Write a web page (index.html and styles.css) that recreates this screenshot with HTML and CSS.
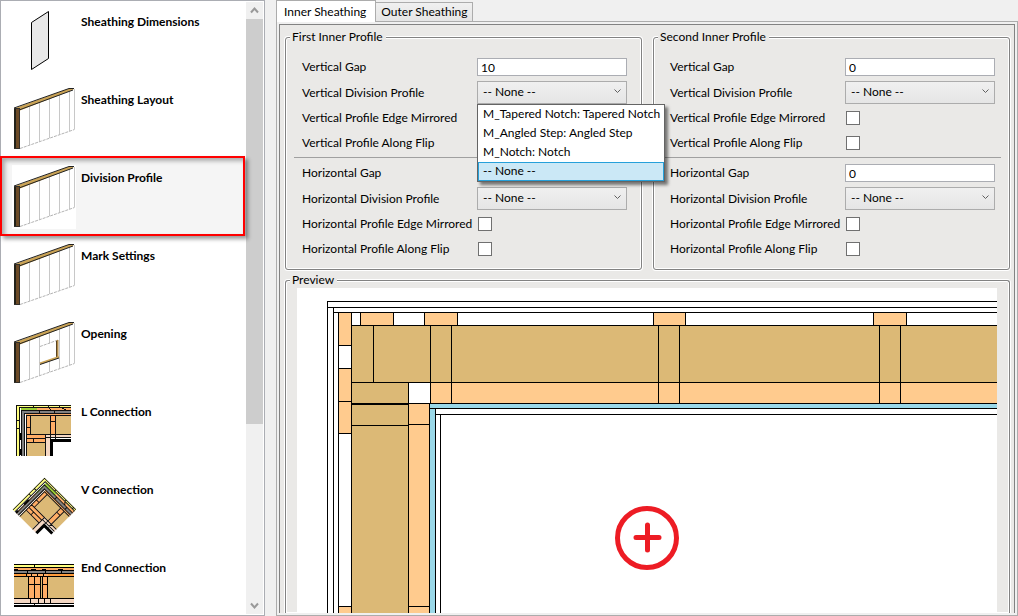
FILE: index.html
```
<!DOCTYPE html>
<html lang="en">
<head>
    <meta charset="UTF-8">
    <meta name="viewport" content="width=device-width, initial-scale=1.0">
    <title>Division Profile</title>
    <link rel="stylesheet" href="styles.css">
</head>
<body>
    <!-- Shared icon shapes -->
    <svg class="sprite" aria-hidden="true">
        <clipPath id="arms"><path d="M4 6H51V53H4Z"/></clipPath>
        <symbol id="wall" viewBox="0 0 64 64">
            <path d="M8 22 62.500 2V42.500L8 61.500Z" fill="#fff"/>
            <path d="M17.500 19V58M27.500 15V54.500M37.500 11V51M47.500 8V47.500M57.500 4V44M62.500 2V42" stroke="#c8c8c8" fill="none"/>
            <path d="M8 61.500 62.500 42.500" stroke="#b4b4b4" stroke-dasharray="3 1"/>
            <path d="M2 21.500 57 1.500 62 2.500 8 23.500Z" fill="#caa355"/>
            <path d="M2 21 57 1.500H62M7 23 61 3" stroke="#222" fill="none"/>
            <path d="M2 21H8V62H2Z" fill="#6b4a26"/>
            <path d="M3 21V62" stroke="#22221a" stroke-width="2"/>
            <path d="M7.500 21V62M2 21.500H8M2 61.500H7" stroke="#33302a"/>
        </symbol>
        <symbol id="corner" viewBox="0 0 64 64">
            <path d="M4 6H59V42H40V57H4Z" fill="#fff"/>
            <path d="M4 6H59V9H7V57H4Z" fill="#ffff80"/>
            <path d="M9 9H25V12H12V24H9Z" fill="#9acd32"/>
            <path d="M25 9H59V12H25ZM9 24H12V57H9ZM14 14H59V16H14ZM14 16H19V40H14ZM38 16H44V35H38ZM14 35H33V44H14Z" fill="#ffad66"/>
            <path d="M10 12H59V14H13V57H10Z" fill="#808080"/>
            <path d="M19 16H38V35H19ZM44 16H59V35H44ZM14 44H33V57H14Z" fill="#dcb976"/>
            <path d="M33 35H59V39H38V57H33Z" fill="#f5d8c4"/>
            <path d="M4.500 57V6.500H59M7.500 57V8.500H59M9.500 57V11.500H59M12.500 57V14.500H59M14.500 57V16.500H59M18.500 16V35M38.500 16V40M43.500 16V40M14 35.500H59M14 39.500H33M33 38.500H59M14 43.500H33M33.500 35V57M21.500 40V43M4 21.500H7M4 29.500H7M14 28.500H18M38 22.500H44M21.500 7V9M36.500 7V9M47.500 7V9M37 9 39 11M50 9 54 11M27.500 12V14M42.500 12V14" stroke="#111" fill="none"/>
            <path d="M39 57V41.500H59" stroke="#000" stroke-width="3" fill="none"/>
            <path d="M9 34V41M9 50V56" stroke="#000" stroke-width="2"/>
        </symbol>
    </svg>

    <div class="window">
        <nav class="sidebar" aria-label="Settings">
            <ul class="nav-list">
                <li>
                    <button type="button" class="nav-item">
                        <svg class="nav-icon" viewBox="0 0 64 64"><path d="M19.500 13.500 36.500 2.500V49.500L19.500 60.500Z" fill="#e8e8e8" stroke="#000"/></svg>
                        <span>Sheathing Dimensions</span>
                    </button>
                </li>
                <li>
                    <button type="button" class="nav-item">
                        <svg class="nav-icon" viewBox="0 0 64 64"><use href="#wall"/></svg>
                        <span>Sheathing Layout</span>
                    </button>
                </li>
                <li>
                    <button type="button" class="nav-item selected" aria-current="page">
                        <svg class="nav-icon" viewBox="0 0 64 64"><use href="#wall"/></svg>
                        <span>Division Profile</span>
                    </button>
                </li>
                <li>
                    <button type="button" class="nav-item">
                        <svg class="nav-icon" viewBox="0 0 64 64"><use href="#wall"/></svg>
                        <span>Mark Settings</span>
                    </button>
                </li>
                <li>
                    <button type="button" class="nav-item">
                        <svg class="nav-icon" viewBox="0 0 64 64">
                            <use href="#wall"/>
                            <path d="M28 26 47 19V37L28 43.500Z" fill="#fff"/>
                            <path d="M27.500 26V43M47.500 19V37" stroke="#c8c8c8"/>
                            <path d="M28 25.500 46 19" stroke="#b4b4b4" stroke-dasharray="3 1"/>
                            <path d="M45.500 19V37" stroke="#b08a48" stroke-width="2"/>
                            <path d="M44.500 20V36" stroke="#5a4424"/>
                            <path d="M28 42.500 47 36" stroke="#caa355" stroke-width="2"/>
                            <path d="M28 43.500 47 37" stroke="#222"/>
                        </svg>
                        <span>Opening</span>
                    </button>
                </li>
                <li>
                    <button type="button" class="nav-item">
                        <svg class="nav-icon" viewBox="0 0 64 64" shape-rendering="crispEdges"><use href="#corner"/></svg>
                        <span>L Connection</span>
                    </button>
                </li>
                <li>
                    <button type="button" class="nav-item">
                        <svg class="nav-icon" viewBox="0 0 64 64">
                            <g transform="translate(32.500 .500) rotate(45) scale(.96) translate(-4 -6)" clip-path="url(#arms)"><use href="#corner" width="64" height="64"/></g>
                        </svg>
                        <span>V Connection</span>
                    </button>
                </li>
                <li>
                    <button type="button" class="nav-item">
                        <svg class="nav-icon" viewBox="0 0 64 64" shape-rendering="crispEdges">
                            <path d="M2 9H62V13H2Z" fill="#ffff80"/>
                            <path d="M2 13H62V16H2Z" fill="#ffad66"/>
                            <path d="M2 16H62V18H2Z" fill="#808080"/>
                            <path d="M2 18H62V21H2Z" fill="#ff9c3c"/>
                            <path d="M2 21H62V43H2Z" fill="#dcb976"/>
                            <path d="M16 18H36V21H28V43H16ZM31 21H36V43H31Z" fill="#ffad66"/>
                            <path d="M2 43H62V48H2Z" fill="#f5d8c4"/>
                            <path d="M2 9.500H62M2 12.500H62M2 15.500H62M2 18.500H62M2 21.500H62M2 43.500H62M2 48.500H62M22.500 9V13M16.500 21V43M22.500 21V43M28.500 21V43M30.500 21V43M35.500 21V43M16 29.500H28M31 29.500H36M18.500 43V48M26.500 43V48M32.500 43V48M38.500 43V48M22.500 48V50M15.500 16V18M33.500 16V18M49.500 16V18M14.500 18V21M19.500 18V21M25.500 18V21M31.500 18V21M2 14.500H6M19 14.500H24M30 14.500H34M46 14.500H51" stroke="#000"/>
                            <path d="M2 51H62" stroke="#000" stroke-width="2"/>
                        </svg>
                        <span>End Connection</span>
                    </button>
                </li>
            </ul>
            <div class="scrollbar">
                <button type="button" class="scroll-button" aria-label="Scroll up">
                    <svg width="9" height="9" viewBox="0 0 9 9"><path d="M1 6.500 4.500 2.500 8 6.500" fill="none" stroke="#999" stroke-width="2"/></svg>
                </button>
                <div class="scroll-thumb"></div>
                <div class="scroll-track"></div>
                <button type="button" class="scroll-button" aria-label="Scroll down">
                    <svg width="9" height="9" viewBox="0 0 9 9"><path d="M1 2.500 4.500 6.500 8 2.500" fill="none" stroke="#999" stroke-width="2"/></svg>
                </button>
            </div>
        </nav>

        <main class="content">
            <div class="tabs" role="tablist">
                <button type="button" class="tab active" role="tab" aria-selected="true">Inner Sheathing</button>
                <button type="button" class="tab" role="tab" aria-selected="false">Outer Sheathing</button>
            </div>

            <div class="tab-page">
                <div class="panel">
                    <div class="profiles">
                        <fieldset class="group">
                            <legend>First Inner Profile</legend>
                            <div class="rows">
                                <div class="row">
                                    <label for="v-gap-1">Vertical Gap</label>
                                    <input type="text" class="field" id="v-gap-1" value="10">
                                </div>
                                <div class="row combo-row">
                                    <label for="v-profile-1">Vertical Division Profile</label>
                                    <div class="combo">
                                        <select id="v-profile-1"><option>-- None --</option></select>
                                        <svg class="arrow" viewBox="0 0 7 5"><path d="M.500 .500 3.500 3.500 6.500 .500" fill="none" stroke="#606060"/></svg>
                                        <ul class="dropdown" role="listbox" aria-label="Vertical Division Profile">
                                            <li role="option">M_Tapered Notch: Tapered Notch</li>
                                            <li role="option">M_Angled Step: Angled Step</li>
                                            <li role="option">M_Notch: Notch</li>
                                            <li role="option" class="current" aria-selected="true">-- None --</li>
                                        </ul>
                                    </div>
                                </div>
                                <div class="row check-row">
                                    <label for="v-edge-1">Vertical Profile Edge Mirrored</label>
                                    <input type="checkbox" class="check" id="v-edge-1">
                                </div>
                                <div class="row check-row">
                                    <label for="v-flip-1">Vertical Profile Along Flip</label>
                                    <input type="checkbox" class="check" id="v-flip-1">
                                </div>
                                <hr class="divider">
                                <div class="row">
                                    <label for="h-gap-1">Horizontal Gap</label>
                                    <input type="text" class="field" id="h-gap-1">
                                </div>
                                <div class="row combo-row">
                                    <label for="h-profile-1">Horizontal Division Profile</label>
                                    <div class="combo">
                                        <select id="h-profile-1"><option>-- None --</option></select>
                                        <svg class="arrow" viewBox="0 0 7 5"><path d="M.500 .500 3.500 3.500 6.500 .500" fill="none" stroke="#606060"/></svg>
                                    </div>
                                </div>
                                <div class="row check-row">
                                    <label for="h-edge-1">Horizontal Profile Edge Mirrored</label>
                                    <input type="checkbox" class="check" id="h-edge-1">
                                </div>
                                <div class="row check-row">
                                    <label for="h-flip-1">Horizontal Profile Along Flip</label>
                                    <input type="checkbox" class="check" id="h-flip-1">
                                </div>
                            </div>
                        </fieldset>

                        <fieldset class="group">
                            <legend>Second Inner Profile</legend>
                            <div class="rows">
                                <div class="row">
                                    <label for="v-gap-2">Vertical Gap</label>
                                    <input type="text" class="field" id="v-gap-2" value="0">
                                </div>
                                <div class="row combo-row">
                                    <label for="v-profile-2">Vertical Division Profile</label>
                                    <div class="combo">
                                        <select id="v-profile-2"><option>-- None --</option></select>
                                        <svg class="arrow" viewBox="0 0 7 5"><path d="M.500 .500 3.500 3.500 6.500 .500" fill="none" stroke="#606060"/></svg>
                                    </div>
                                </div>
                                <div class="row check-row">
                                    <label for="v-edge-2">Vertical Profile Edge Mirrored</label>
                                    <input type="checkbox" class="check" id="v-edge-2">
                                </div>
                                <div class="row check-row">
                                    <label for="v-flip-2">Vertical Profile Along Flip</label>
                                    <input type="checkbox" class="check" id="v-flip-2">
                                </div>
                                <hr class="divider">
                                <div class="row">
                                    <label for="h-gap-2">Horizontal Gap</label>
                                    <input type="text" class="field" id="h-gap-2" value="0">
                                </div>
                                <div class="row combo-row">
                                    <label for="h-profile-2">Horizontal Division Profile</label>
                                    <div class="combo">
                                        <select id="h-profile-2"><option>-- None --</option></select>
                                        <svg class="arrow" viewBox="0 0 7 5"><path d="M.500 .500 3.500 3.500 6.500 .500" fill="none" stroke="#606060"/></svg>
                                    </div>
                                </div>
                                <div class="row check-row">
                                    <label for="h-edge-2">Horizontal Profile Edge Mirrored</label>
                                    <input type="checkbox" class="check" id="h-edge-2">
                                </div>
                                <div class="row check-row">
                                    <label for="h-flip-2">Horizontal Profile Along Flip</label>
                                    <input type="checkbox" class="check" id="h-flip-2">
                                </div>
                            </div>
                        </fieldset>
                    </div>

                    <fieldset class="group preview">
                        <legend>Preview</legend>
                        <svg class="drawing" viewBox="0 1 700 325" preserveAspectRatio="xMinYMin slice" role="img" aria-label="Wall corner, plan view">
                            <g shape-rendering="crispEdges">
                                <!-- studs and insulation -->
                                <path d="M54 38H700V95H111V326H54Z" fill="#dcb976"/>
                                <path d="M133 95H700V116H133ZM111 116H132V326H111Z" fill="#ffcb8e"/>
                                <path d="M63 25H96V38H63ZM127 25H160V38H127ZM356 25H388V38H356ZM576 25H609V38H576Z" fill="#ffcb8e"/>
                                <path d="M41 25H54V58H41ZM41 81H54V146H41ZM41 319H54V326H41Z" fill="#ffcb8e"/>
                                <path d="M132 116H700V121H138V326H132Z" fill="#9ad8e8"/>
                                <!-- layer outlines -->
                                <g fill="none" stroke="#000" transform="translate(.5 .5)">
                                    <path d="M30 330V14H701M30 20H701M36 330V20M36 25H701M41 330V25M54 330V25M54 38H701M54 95H701"/>
                                    <path d="M54 116H701M54 117H111M132 121H701M111 95V330M132 116V330M138 121V330M143 330V127M138 127H701"/>
                                    <path d="M76 38V95M133 38V116M154 38V116M361 38V116M382 38V116M582 38V116M603 38V116"/>
                                    <path d="M63 25V38M96 25V38M127 25V38M160 25V38M356 25V38M388 25V38M576 25V38M609 25V38"/>
                                    <path d="M41 58H54M41 81H54M41 114H54M41 146H54M41 319H54M54 138H111M111 137H132M111 319H132"/>
                                </g>
                            </g>
                            <g fill="none" stroke="#ed1c24" stroke-linecap="round">
                                <circle cx="350" cy="251" r="29.500" stroke-width="5"/>
                                <path d="M339 250.500H362M350.500 238V263" stroke-width="5"/>
                            </g>
                        </svg>
                    </fieldset>
                </div>
            </div>
        </main>
    </div>
</body>
</html>
```
FILE: styles.css
```
* {
    margin: 0;
    padding: 0;
    box-sizing: border-box;
}

:root {
    --window-bg: #f0f0f0;
    --panel-bg: #eae9e7;
    --border: #acacac;
    --group-border: #828282;
    --field-border: #abadb3;
    --highlight: #ff0000;
}

body {
    font-family: Lato, 'Segoe UI', sans-serif;
    font-size: 12px;
    line-height: 16px;
    color: #000;
    background: var(--window-bg);
    overflow: hidden;
}

button,
input,
select {
    font: inherit;
    color: inherit;
}

ul {
    list-style: none;
}

.sprite {
    position: absolute;
    width: 0;
    height: 0;
}

.window {
    display: flex;
    gap: 11px;
    height: 100vh;
}

/* Sidebar */
.sidebar {
    display: flex;
    flex: none;
    width: 265px;
    padding: 1px;
    background: #fff;
    border: 1px solid var(--field-border);
}

.nav-list {
    flex: 1;
    min-width: 0;
    overflow-x: visible;
    overflow-y: clip;
}

.nav-item {
    position: relative;
    display: flex;
    gap: 5px;
    width: 100%;
    padding: 7px 10px;
    border: none;
    background: none;
    font-weight: 700;
    text-align: left;
    white-space: nowrap;
}

.nav-item span {
    padding-top: 5px;
}

.nav-icon {
    flex: none;
    width: 64px;
    height: 64px;
    background: #fff;
}

.nav-item.selected {
    background: #f5f5f5;
}

.nav-item.selected::after {
    content: '';
    position: absolute;
    inset: -2px 1px 0 -2px;
    border: 2px solid var(--highlight);
    box-shadow: 3px 3px 4px rgba(0, 0, 0, 0.4), inset 3px 3px 4px rgba(0, 0, 0, 0.3);
}

.scrollbar {
    display: flex;
    flex-direction: column;
    width: 17px;
    background: var(--window-bg);
}

.scroll-button {
    display: flex;
    align-items: center;
    justify-content: center;
    height: 17px;
    border: none;
    background: var(--window-bg);
}

.scroll-thumb {
    flex: 7;
    background: #cdcdcd;
}

.scroll-track {
    flex: 3;
}

/* Tabs */
.content {
    display: flex;
    flex: 1;
    flex-direction: column;
    min-width: 0;
}

.tabs {
    display: flex;
    align-items: flex-end;
    height: 21px;
}

.tab {
    height: 19px;
    padding: 0 5px;
    border: 1px solid var(--border);
    border-width: 1px 1px 0 0;
    background: linear-gradient(#f0f0f0, #e5e5e5);
    white-space: nowrap;
}

.tab.active {
    z-index: 1;
    height: 22px;
    margin-bottom: -1px;
    padding: 0 9px 0 7px;
    border-left-width: 1px;
    background: #fff;
}

.tab-page {
    display: flex;
    flex: 1;
    min-height: 0;
    padding: 2px;
    border: 1px solid var(--border);
}

.panel {
    display: flex;
    flex: 1;
    flex-direction: column;
    gap: 2px;
    min-width: 0;
    padding: 4px 4px 0 5px;
    border: 1px solid var(--group-border);
    border-bottom: none;
    background: var(--panel-bg);
    overflow: hidden;
}

.profiles {
    display: flex;
    gap: 11px;
}

/* Group boxes */
.group {
    flex: 1;
    min-width: 0;
    border: 1px solid var(--group-border);
    border-radius: 3px;
    box-shadow: 0 0 0 1px #fff, inset 0 0 0 1px #fff;
}

.group legend {
    margin-left: 4px;
    padding: 0 3px 0 2px;
    background: var(--panel-bg);
}

.rows {
    padding: 9px 14px 8px 16px;
}

.row {
    display: flex;
    align-items: center;
    justify-content: space-between;
    height: 26px;
    white-space: nowrap;
}

.combo-row,
.check-row {
    height: 25px;
}

.field {
    width: 150px;
    height: 18px;
    padding: 0 3px;
    border: 1px solid var(--field-border);
    background: #fff;
}

.combo {
    position: relative;
    width: 150px;
}

.combo select {
    display: block;
    width: 100%;
    height: 23px;
    padding: 0 20px 2px 5px;
    appearance: none;
    border: 1px solid var(--border);
    border-radius: 0;
    background: linear-gradient(#f0f0f0, #e5e5e5);
}

.arrow {
    position: absolute;
    top: 8px;
    right: 6px;
    width: 7px;
    height: 5px;
    pointer-events: none;
}

.dropdown {
    position: absolute;
    top: 100%;
    left: 0;
    z-index: 2;
    width: 188px;
    border: 1px solid #646464;
    background: #fff;
    box-shadow: 3px 3px 3px rgba(0, 0, 0, 0.5);
}

.dropdown li {
    height: 19px;
    padding: 0 4px;
    border: 1px solid transparent;
}

.dropdown .current {
    border-color: #26a0da;
    background: #cbe8f6;
}

.check {
    flex: none;
    width: 14px;
    height: 14px;
    margin-right: 135px;
    appearance: none;
    border: 1px solid #707070;
    background: #fff;
}

.divider {
    height: 1px;
    margin: 2px -6px 2px -8px;
    border: none;
    background: #a0a0a0;
}

/* Preview */
.preview {
    display: flex;
    flex-direction: column;
    min-height: 0;
    border-bottom: none;
    border-radius: 3px 3px 0 0;
}

.drawing {
    flex: 1;
    min-height: 0;
    margin: 0 12px 0 11px;
    background: #fff;
}
```
